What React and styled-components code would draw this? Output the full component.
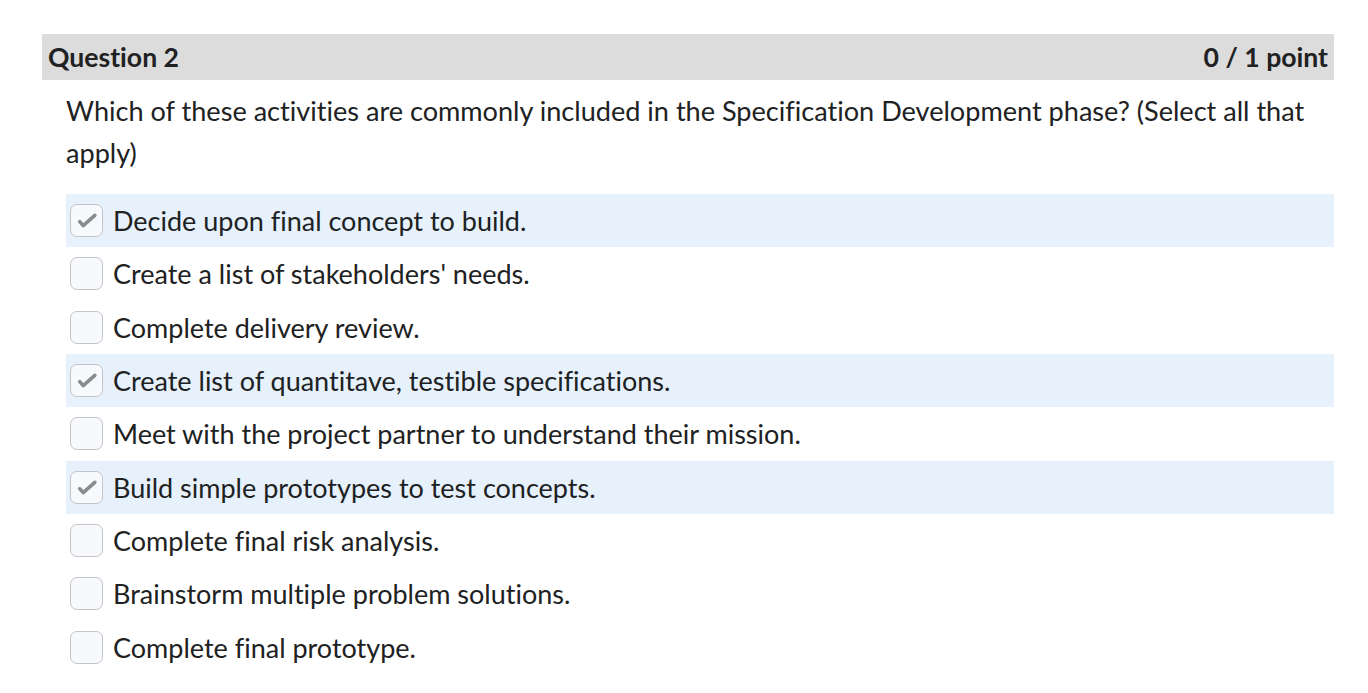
import React from "react";
import styled, { createGlobalStyle } from "styled-components";

const Global = createGlobalStyle`
  html, body { margin: 0; padding: 0; background: #ffffff; }
  body {
    font-family: Lato, "Open Sans", sans-serif;
    color: #202122;
    font-variant-ligatures: none;
  }
`;

const Page = styled.div`
  padding: 34px 34px 0 42px;
`;

const Header = styled.div`
  display: flex;
  justify-content: space-between;
  align-items: center;
  height: 46px;
  background: #dcdcdc;
  padding: 0 6px;
  font-size: 26.6px;
  font-weight: 700;
  color: #202122;
`;

const Body = styled.div`
  padding-left: 24px;
`;

const Prompt = styled.p`
  margin: 10px 0 20px;
  font-size: 27.1px;
  line-height: 42px;
`;

const List = styled.div`
  display: flex;
  flex-direction: column;
`;

const Row = styled.label`
  display: flex;
  align-items: center;
  gap: 10px;
  height: 53.33px;
  padding-left: 4px;
  background: ${(p) => (p.$checked ? "#e6f1fc" : "transparent")};
  font-size: 27px;
`;

const Box = styled.span`
  flex: none;
  position: relative;
  width: 31px;
  height: 31px;
  border: 1px solid #c2c4c7;
  border-radius: 7px;
  background: #f7f9fd;
`;

const CheckSvg = styled.svg`
  position: absolute;
  inset: 0;
`;

const Check = () => (
  <CheckSvg width="31" height="31" viewBox="0 0 31 31" fill="none">
    <path d="M8.7 16.6 L12.2 20.6 L23.8 10.3" stroke="#8a8b8d" strokeWidth="3.6" strokeLinecap="round" strokeLinejoin="round" />
  </CheckSvg>
);

const options = [
  ["Decide upon final concept to build.", true],
  ["Create a list of stakeholders' needs.", false],
  ["Complete delivery review.", false],
  ["Create list of quantitave, testible specifications.", true],
  ["Meet with the project partner to understand their mission.", false],
  ["Build simple prototypes to test concepts.", true],
  ["Complete final risk analysis.", false],
  ["Brainstorm multiple problem solutions.", false],
  ["Complete final prototype.", false],
];

export default function App() {
  return (
    <>
      <Global />
      <Page>
        <Header>
          <span>Question 2</span>
          <span>0 / 1 point</span>
        </Header>
        <Body>
          <Prompt>
            Which of these activities are commonly included in the Specification Development phase? (Select all that apply)
          </Prompt>
          <List>
            {options.map(([text, checked]) => (
              <Row key={text} $checked={checked}>
                <Box>{checked && <Check />}</Box>
                <span>{text}</span>
              </Row>
            ))}
          </List>
        </Body>
      </Page>
    </>
  );
}
